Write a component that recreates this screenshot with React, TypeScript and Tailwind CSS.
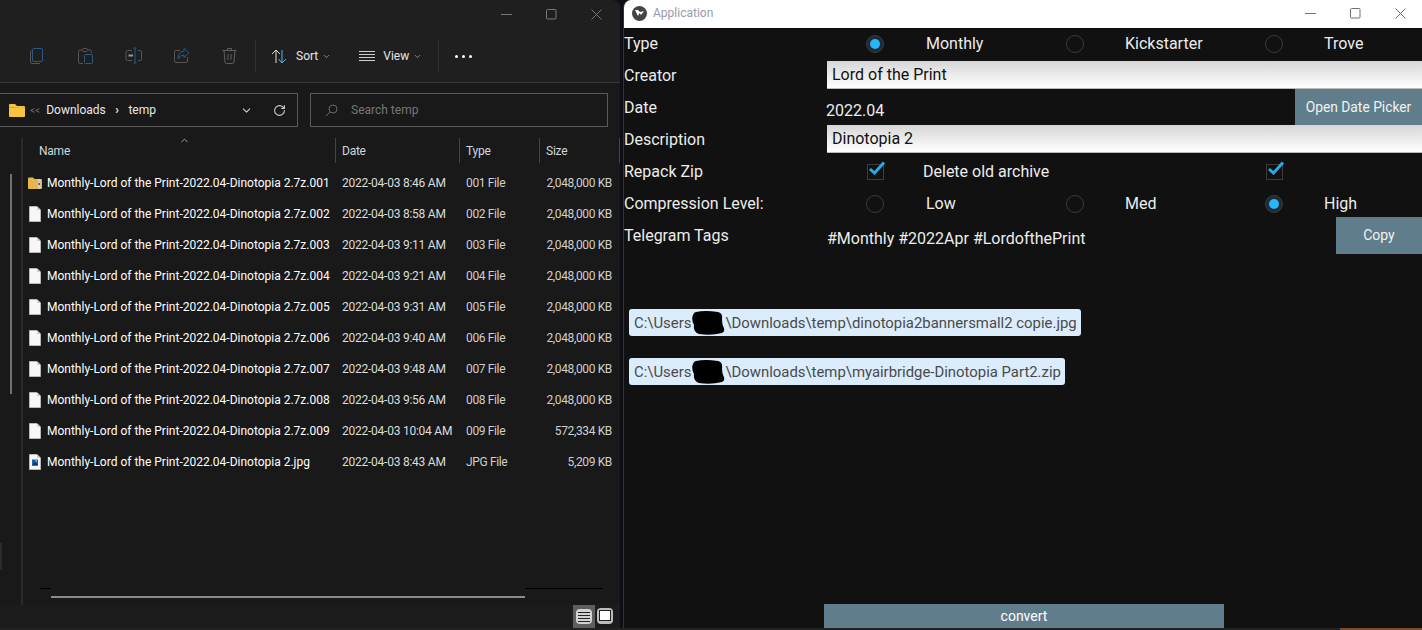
import React from "react";
import { ChevronDown, ChevronUp, RotateCw } from "lucide-react";

const seg = "font-['Roboto',sans-serif]";

const files = [
  ["Monthly-Lord of the Print-2022.04-Dinotopia 2.7z.001", "2022-04-03 8:46 AM", "001 File", "2,048,000 KB", "zip"],
  ["Monthly-Lord of the Print-2022.04-Dinotopia 2.7z.002", "2022-04-03 8:58 AM", "002 File", "2,048,000 KB", "doc"],
  ["Monthly-Lord of the Print-2022.04-Dinotopia 2.7z.003", "2022-04-03 9:11 AM", "003 File", "2,048,000 KB", "doc"],
  ["Monthly-Lord of the Print-2022.04-Dinotopia 2.7z.004", "2022-04-03 9:21 AM", "004 File", "2,048,000 KB", "doc"],
  ["Monthly-Lord of the Print-2022.04-Dinotopia 2.7z.005", "2022-04-03 9:31 AM", "005 File", "2,048,000 KB", "doc"],
  ["Monthly-Lord of the Print-2022.04-Dinotopia 2.7z.006", "2022-04-03 9:40 AM", "006 File", "2,048,000 KB", "doc"],
  ["Monthly-Lord of the Print-2022.04-Dinotopia 2.7z.007", "2022-04-03 9:48 AM", "007 File", "2,048,000 KB", "doc"],
  ["Monthly-Lord of the Print-2022.04-Dinotopia 2.7z.008", "2022-04-03 9:56 AM", "008 File", "2,048,000 KB", "doc"],
  ["Monthly-Lord of the Print-2022.04-Dinotopia 2.7z.009", "2022-04-03 10:04 AM", "009 File", "572,334 KB", "doc"],
  ["Monthly-Lord of the Print-2022.04-Dinotopia 2.jpg", "2022-04-03 8:43 AM", "JPG File", "5,209 KB", "jpg"],
];

function WinButtons({ color, gaps }: { color: string; gaps: string }) {
  return (
    <div className={`flex items-center ${gaps}`}>
      <svg width="11" height="11" viewBox="0 0 11 11" fill="none" stroke={color} strokeWidth="1">
        <path d="M0 5.5 H11" />
      </svg>
      <svg width="11" height="11" viewBox="0 0 11 11" fill="none" stroke={color} strokeWidth="1">
        <rect x=".5" y=".5" width="9.5" height="9.5" rx="1" />
      </svg>
      <svg width="11" height="11" viewBox="0 0 11 11" fill="none" stroke={color} strokeWidth="1">
        <path d="M.5 .5 L10.5 10.5 M10.5 .5 L.5 10.5" />
      </svg>
    </div>
  );
}

function FileIcon({ kind }: { kind: string }) {
  if (kind === "zip")
    return (
      <svg width="14" height="12" viewBox="0 0 14 12" className="shrink-0">
        <path d="M0 1.5 Q0 .5 1 .5 H5 L6.5 2 H13 Q14 2 14 3 V11 Q14 12 13 12 H1 Q0 12 0 11 Z" fill="#e8b44c" />
        <rect x="10" y="2" width="2.5" height="10" fill="#cfcfcf" />
        <rect x="10.5" y="6" width="1.5" height="2" fill="#555" />
      </svg>
    );
  return (
    <svg width="12" height="16" viewBox="0 0 12 16" className="shrink-0">
      <path d="M.5.5 H8 L11.5 4 V15.5 H.5 Z" fill="#f7f7f7" stroke="#b8b8b8" />
      <path d="M8 .5 V4 H11.5" fill="#d0d0d0" />
      {kind === "jpg" && (
        <>
          <rect x="3" y="5.5" width="6" height="6" fill="#1560a8" />
          <path d="M3 11.5 L6 8 L9 11.5 Z" fill="#0c3568" />
          <rect x="6.5" y="6" width="1.5" height="1.5" fill="#8fd0f5" />
        </>
      )}
    </svg>
  );
}

function ToolIcon({ children }: { children: React.ReactNode }) {
  return (
    <div className="w-12 flex justify-center">
      <svg width="18" height="18" viewBox="0 0 18 18" fill="none" strokeWidth="1">
        {children}
      </svg>
    </div>
  );
}

function Explorer() {
  return (
    <div className={`w-[620px] h-full flex flex-col bg-[#191919] rounded-tr-lg overflow-hidden text-[12px] ${seg}`}>
      <div className="h-[28px] bg-[#1f1f1f] flex items-center justify-end shrink-0 pr-[18px]">
        <WinButtons color="#787878" gaps="gap-[34px]" />
      </div>

      <div className="h-[55px] bg-[#1f1f1f] border-b border-[#3a3a3a] flex items-center shrink-0 pl-[14px] pt-[2px] text-[#e6e6e6]">
        <ToolIcon>
          <rect x="3.5" y="1.5" width="10" height="13" rx="1.5" stroke="#2b5a80" />
          <path d="M3.5 4 H2.5 Q1.5 4 1.5 5 V15 Q1.5 16.5 3 16.5 H11" stroke="#555" />
        </ToolIcon>
        <ToolIcon>
          <path d="M6 3 H3 Q1.5 3 1.5 4.5 V15 Q1.5 16.5 3 16.5 H6 M11 3 H13 Q14.5 3 14.5 4.5 V6" stroke="#555" />
          <rect x="5.5" y="1.5" width="5" height="3" rx="1" stroke="#555" />
          <rect x="7.5" y="7.5" width="8" height="9" rx="1" stroke="#2b5a80" />
        </ToolIcon>
        <ToolIcon>
          <path d="M7 3.5 H2.5 Q1 3.5 1 5 V12 Q1 13.5 2.5 13.5 H7 M13 3.5 H15 Q16.5 3.5 16.5 5 V12 Q16.5 13.5 15 13.5 H13" stroke="#555" />
          <path d="M3.5 8.5 H8" stroke="#999" strokeWidth="2" />
          <path d="M10 1 V16 M8.5 1 H11.5 M8.5 16 H11.5" stroke="#2b5a80" />
        </ToolIcon>
        <ToolIcon>
          <path d="M14.5 10 V14 Q14.5 15.5 13 15.5 H3 Q1.5 15.5 1.5 14 V5 Q1.5 3.5 3 3.5 H7" stroke="#555" />
          <path d="M11 1.5 L16 6 L11 10.5 V8 Q7 8 5 12 Q5 5 11 4 Z" stroke="#2b5a80" />
        </ToolIcon>
        <ToolIcon>
          <path d="M1.5 3.5 H15.5 M6.5 3.5 V1.5 H10.5 V3.5 M3 3.5 L4 15 Q4 16.5 5.5 16.5 H11.5 Q13 16.5 13 15 L14 3.5 M7 7 V13 M10 7 V13" stroke="#5f5f5f" />
        </ToolIcon>
        <div className="w-px h-8 bg-[#333] ml-[1px] mr-[15px]" />
        <svg width="17" height="15" viewBox="0 0 17 15" fill="none" strokeWidth="1" className="mr-[8px]">
          <path d="M5 14 V1 M1 5 L5 1 L9 5" stroke="#ddd" />
          <path d="M11 1 V14 M7.5 10 L11 14 L15 10" stroke="#5db4e8" />
        </svg>
        <span>Sort</span>
        <ChevronDown size={9} className="ml-[4px] text-[#aaa]" />
        <svg width="16" height="11" viewBox="0 0 16 11" stroke="#cfcfcf" strokeWidth="1" className="ml-[28px] mr-[8px]">
          <path d="M0 .5 H16 M0 3.5 H16 M0 6.5 H16 M0 9.5 H16" />
        </svg>
        <span>View</span>
        <ChevronDown size={9} className="ml-[4px] text-[#aaa]" />
        <div className="w-px h-8 bg-[#333] ml-[16px] mr-[16px]" />
        <div className="flex gap-[4px]">
          <span className="w-[3px] h-[3px] rounded-full bg-white" />
          <span className="w-[3px] h-[3px] rounded-full bg-white" />
          <span className="w-[3px] h-[3px] rounded-full bg-white" />
        </div>
      </div>

      <div className="flex shrink-0 h-[34px] mt-[10px] mb-[11px] text-[#e8e8e8]">
        <div className="w-[298px] border border-[#5a5a5a] border-l-0 flex items-center pl-[9px] pr-[11px]">
          <svg width="16" height="13" viewBox="0 0 16 13" className="shrink-0">
            <path d="M0 1 Q0 0 1 0 H6 L8 2 H15 Q16 2 16 3 V12 Q16 13 15 13 H1 Q0 13 0 12 Z" fill="#f5c542" />
            <path d="M0 4 H16 V3.5 H7 L6 3 H0 Z" fill="#e0a520" />
          </svg>
          <span className="text-[#666] text-[10px] ml-[5px] mr-[6px]">&lt;&lt;</span>
          <span>Downloads</span>
          <span className="mx-[9.5px] font-bold">›</span>
          <span>temp</span>
          <ChevronDown size={13} className="ml-auto text-[#ccc]" />
          <RotateCw size={13} className="ml-[20px] text-[#ccc]" />
        </div>
        <div className="w-[298px] ml-[12px] border border-[#5a5a5a] flex items-center pl-[14px] text-[#777]">
          <svg width="13" height="13" viewBox="0 0 13 13" fill="none" stroke="#6a6a6a" strokeWidth="1" className="mr-[13px]">
            <circle cx="8" cy="5" r="4" />
            <path d="M5 8 L1 12" />
          </svg>
          <span>Search temp</span>
        </div>
      </div>

      <div className="flex-1 flex min-h-0 relative">
        <div className="w-[23px] shrink-0 border-r-2 border-[#2a2a2a] relative">
          <div className="absolute left-[10px] top-[36px] w-[2px] h-[220px] bg-[#707070]" />
          <div className="absolute left-0 top-[405px] w-[2px] h-[27px] bg-[#2c2c2c]" />
        </div>
        <div className="flex-1 flex flex-col min-w-0">
          <div className="flex h-[25px] shrink-0 text-[#cfd6dc] tracking-[-0.02em] relative">
            <div className="w-[313px] pl-[16px] flex items-center border-r border-[#444]">Name</div>
            <div className="w-[124px] pl-[6px] flex items-center border-r border-[#444]">Date</div>
            <div className="w-[80px] pl-[6px] flex items-center border-r border-[#444]">Type</div>
            <div className="w-[80px] pl-[6px] flex items-center border-r border-[#444]">Size</div>
            <ChevronUp size={11} className="absolute left-[156px] top-[-3px] text-[#aaa]" />
          </div>
          <div className="mt-[4px]">
            {files.map((f) => (
              <div key={f[0]} className="flex h-[31px] items-center">
                <div className="w-[312px] flex items-center pl-[5px] gap-[6px] text-white whitespace-nowrap">
                  <div className="w-[13px] flex justify-center shrink-0">
                    <FileIcon kind={f[4]} />
                  </div>
                  <span>{f[0]}</span>
                </div>
                <div className="w-[124px] pl-[7px] text-[#dcdcdc] tracking-[-0.02em] whitespace-nowrap">{f[1]}</div>
                <div className="w-[64px] pl-[7px] text-[#cfcfcf] tracking-[-0.03em]">{f[2]}</div>
                <div className="w-[89px] text-right text-[#cfcfcf] tracking-[-0.03em]">{f[3]}</div>
              </div>
            ))}
          </div>
        </div>
        <div className="absolute left-[40px] top-[450px] w-[11px] h-px bg-black" />
        <div className="absolute left-[525px] top-[450px] w-[78px] h-px bg-black" />
        <div className="absolute left-[51px] top-[458px] w-[474px] h-[2px] bg-[#8a8a8a]" />
      </div>

      <div className="h-[23px] shrink-0 bg-[#1c1c1c] flex items-start justify-end pr-[7px] gap-[2px]">
        <div className="w-[22px] h-[23px] bg-[#5e5e5e] flex items-center justify-center">
          <div className="w-[16px] h-[15px] bg-[#d2d2d2] rounded-sm flex flex-col justify-center gap-[2px] px-[2px]">
            <span className="h-px bg-[#222]" />
            <span className="h-px bg-[#222]" />
            <span className="h-px bg-[#222]" />
            <span className="h-px bg-[#222]" />
          </div>
        </div>
        <div className="w-[16px] h-[16px] mt-[3px] bg-[#bdbdbd] rounded-sm p-[2px] pb-[3px]">
          <div className="w-full h-full bg-white border border-[#222]" />
        </div>
      </div>
    </div>
  );
}

function Radio({ on }: { on?: boolean }) {
  return (
    <div className={`w-[18px] h-[18px] rounded-full border border-[#3a3a3a] flex items-center justify-center ${on ? "bg-[#1c2c38]" : ""}`}>
      {on && <div className="w-[10px] h-[10px] rounded-full bg-[#29b6f6]" />}
    </div>
  );
}

function Check() {
  return (
    <div className="w-[17px] h-[16px] border border-[#3d3d3d] relative">
      <svg width="19" height="15" viewBox="0 0 19 15" fill="none" className="absolute left-0 top-[-5px]">
        <path d="M2 9 L6.5 13 L16 2.5" stroke="#29a9e8" strokeWidth="3" />
      </svg>
    </div>
  );
}

function Cell({ children }: { children?: React.ReactNode }) {
  return <div className="flex justify-center items-center">{children}</div>;
}

function RadioRow({ h, labels, active }: { h: string; labels: string[]; active: number }) {
  return (
    <div className={`grid grid-cols-[100px_100px_100px_99px_100px_98px] items-center ${h}`}>
      {labels.map((l, i) => (
        <React.Fragment key={l}>
          <Cell>
            <Radio on={i === active} />
          </Cell>
          <div className={i === 0 ? "pl-[1px]" : ""}>{l}</div>
        </React.Fragment>
      ))}
    </div>
  );
}

function Blot() {
  return (
    <svg width="34" height="24" viewBox="0 0 34 24" className="shrink-0">
      <path d="M5 1 Q14 -1 27 1 Q32 2 31 8 Q31 12 32 15 Q35 20 31 22 Q20 25 8 23 Q2 21 3 14 Q0 8 2 4 Q3 1 5 1 Z" fill="#000" />
    </svg>
  );
}

function Chip({ before, after }: { before: string; after: string }) {
  return (
    <div className="w-fit h-[27px] bg-[#dbecfd] rounded-[3px] pl-[5px] pr-[4px] pt-[1px] flex items-center text-[14.9px] text-[#4a4a4a] whitespace-nowrap">
      <span>{before}</span>
      <Blot />
      <span>{after}</span>
    </div>
  );
}

function AppWindow() {
  const labels = ["Type", "Creator", "Date", "Description", "Repack Zip", "Compression Level:", "Telegram Tags"];
  const input =
    "h-[28px] ml-[2px] bg-gradient-to-b from-[#d6d6d6] to-white text-[#111] pl-[5px] flex items-center border-b border-[#bbb]";
  return (
    <div className="ml-[3px] flex-1 h-full flex flex-col bg-[#111111] rounded-tl-lg overflow-hidden font-['Roboto',sans-serif] text-[16px] text-[#ececec] border-l border-[#333]">
      <div className="h-[28px] shrink-0 bg-white flex items-center pl-[8px] pr-[16px] pb-[2px]">
        <div className="w-[15px] h-[15px] rounded-full bg-[#444] flex items-center justify-center">
          <svg width="9" height="7" viewBox="0 0 9 7">
            <path d="M0 0 L3 6 L4.5 3 L6 5 L9 1 L5 2 L3 0 Z" fill="#fff" />
          </svg>
        </div>
        <span className="ml-[6px] text-[12px] text-[#9a98a8]">Application</span>
        <div className="ml-auto">
          <WinButtons color="#707070" gaps="gap-[34px]" />
        </div>
      </div>

      <div className="flex shrink-0">
        <div className="w-[201px] shrink-0 flex flex-col">
          {labels.map((l) => (
            <div key={l} className="h-[32px] flex items-center whitespace-nowrap">
              {l}
            </div>
          ))}
        </div>
        <div className="flex-1 min-w-0 flex flex-col">
          <RadioRow h="h-[33px] pb-[2px]" labels={["Monthly", "Kickstarter", "Trove"]} active={0} />
          <div className={input}>Lord of the Print</div>
          <div className="h-[36px] flex">
            <div className="ml-[1px] pt-[10px]">2022.04</div>
            <button className="ml-auto w-[127px] h-full bg-[#607d8b] text-[13.8px] text-[#f2f2f2]">Open Date Picker</button>
          </div>
          <div className={input}>Dinotopia 2</div>
          <div className="grid grid-cols-[100px_101px_99px_99px_100px_98px] items-center h-[34px] pt-[3px]">
            <Cell>
              <Check />
            </Cell>
            <div className="col-span-3 -ml-[2px]">Delete old archive</div>
            <Cell>
              <Check />
            </Cell>
          </div>
          <RadioRow h="h-[30px] pt-[3px]" labels={["Low", "Med", "High"]} active={2} />
          <div className="h-[37px] flex items-center pl-[2px]">
            <span className="pt-[6px]">#Monthly #2022Apr #LordofthePrint</span>
            <button className="ml-auto w-[86px] h-full bg-[#607d8b] text-[14px] text-[#f2f2f2]">Copy</button>
          </div>
        </div>
      </div>

      <div className="mt-[55px] ml-[5px] flex flex-col gap-[22px]">
        <Chip before={"C:\\Users"} after={"\\Downloads\\temp\\dinotopia2bannersmall2 copie.jpg"} />
        <Chip before={"C:\\Users"} after={"\\Downloads\\temp\\myairbridge-Dinotopia Part2.zip"} />
      </div>

      <button className="mt-auto ml-[2px] self-center w-[400px] h-[24px] bg-[#607d8b] text-[14px] text-white">convert</button>
    </div>
  );
}

export default function App() {
  return (
    <div className="w-[1422px] h-[630px] flex flex-col bg-[#0d0f14] overflow-hidden">
      <div className="flex h-[628px] shrink-0">
        <Explorer />
        <AppWindow />
      </div>
      <div className="flex-1 flex bg-[#222]">
        <div className="ml-[1340px] w-[82px] bg-[#7a4a2a]" />
      </div>
    </div>
  );
}
